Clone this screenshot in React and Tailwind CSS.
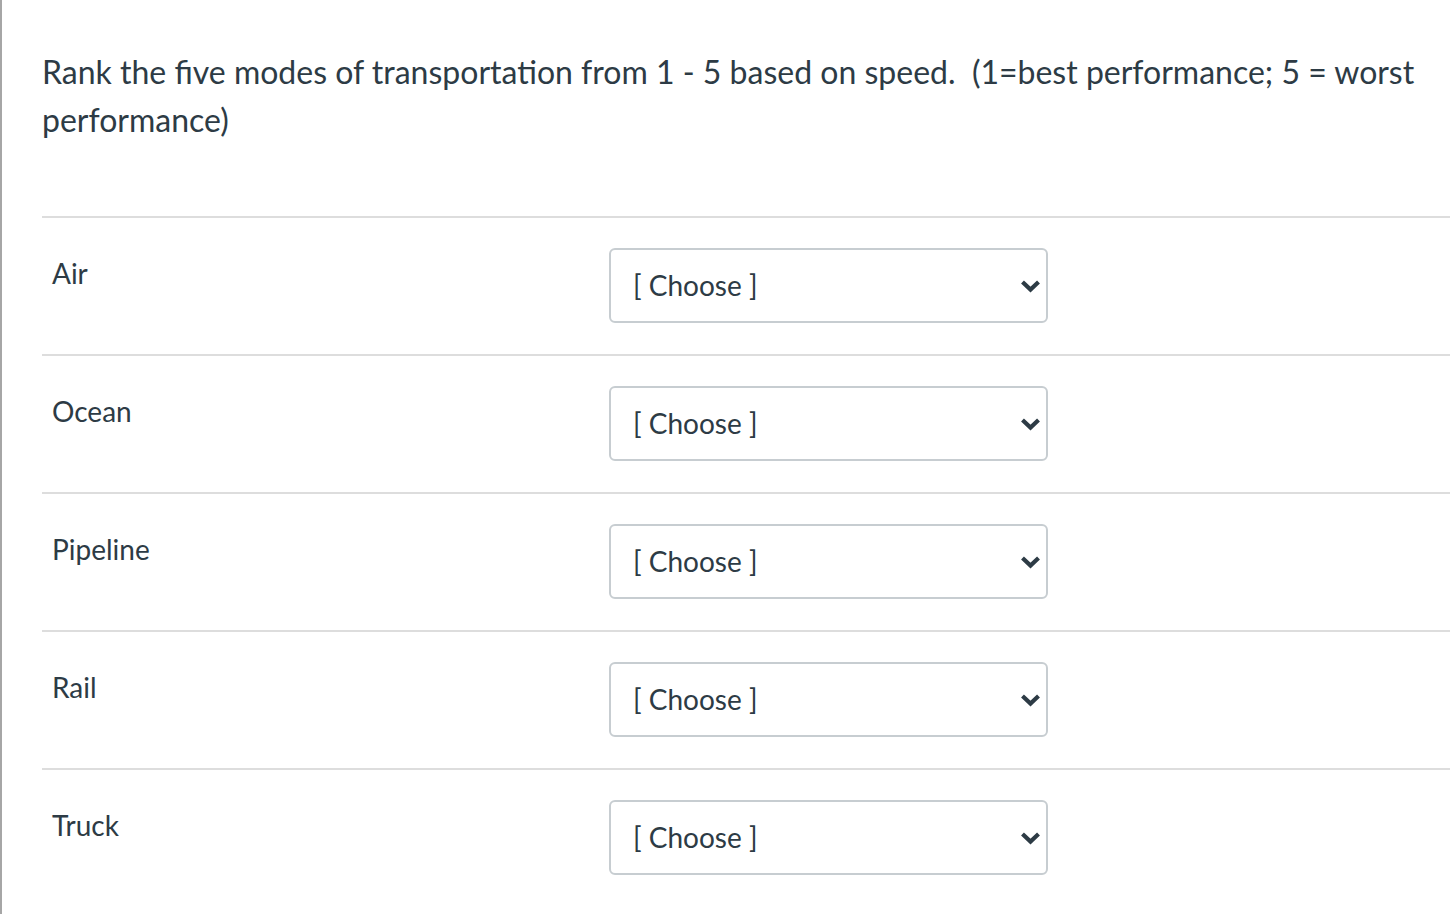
import React from 'react';

const modes = ["Air", "Ocean", "Pipeline", "Rail", "Truck"];

const Chevron = () => (
    <svg width="21" height="14" viewBox="0 0 21 14" className="shrink-0">
        <path d="M2.5 3 L10.5 10.5 L18.5 3" fill="none" stroke="#2d3b45" strokeWidth="4.2" />
    </svg>
);

const App = () => {
    return (
        <div className="min-h-[914px] bg-white border-l-2 border-[#a6a6a6] pl-[40px] pr-[4px] text-[#2d3b45]" style={{ fontFamily: "Lato, 'Open Sans', sans-serif" }}>
            <p className="pt-[48px] text-[32px] leading-[48px]">
                Rank the five modes of transportation from 1 - 5 based on speed.&nbsp; (1=best performance; 5 = worst performance)
            </p>
            <div className="mt-[72px]">
                {modes.map((m) => (
                    <div key={m} className="flex items-start border-t-2 border-[#dddddd] pt-[30px] pb-[31px]">
                        <div className="w-[567px] pl-[10px] pt-[1px] text-[28px] leading-[48px]">{m}</div>
                        <div className="w-[439px] h-[75px] border-2 border-[#c7cdd1] rounded-[6px] flex items-center justify-between pl-[22px] pr-[5px]">
                            <span className="text-[28px] leading-none -mt-[2px]">[ Choose ]</span>
                            <Chevron />
                        </div>
                    </div>
                ))}
            </div>
        </div>
    );
};

export default App;
